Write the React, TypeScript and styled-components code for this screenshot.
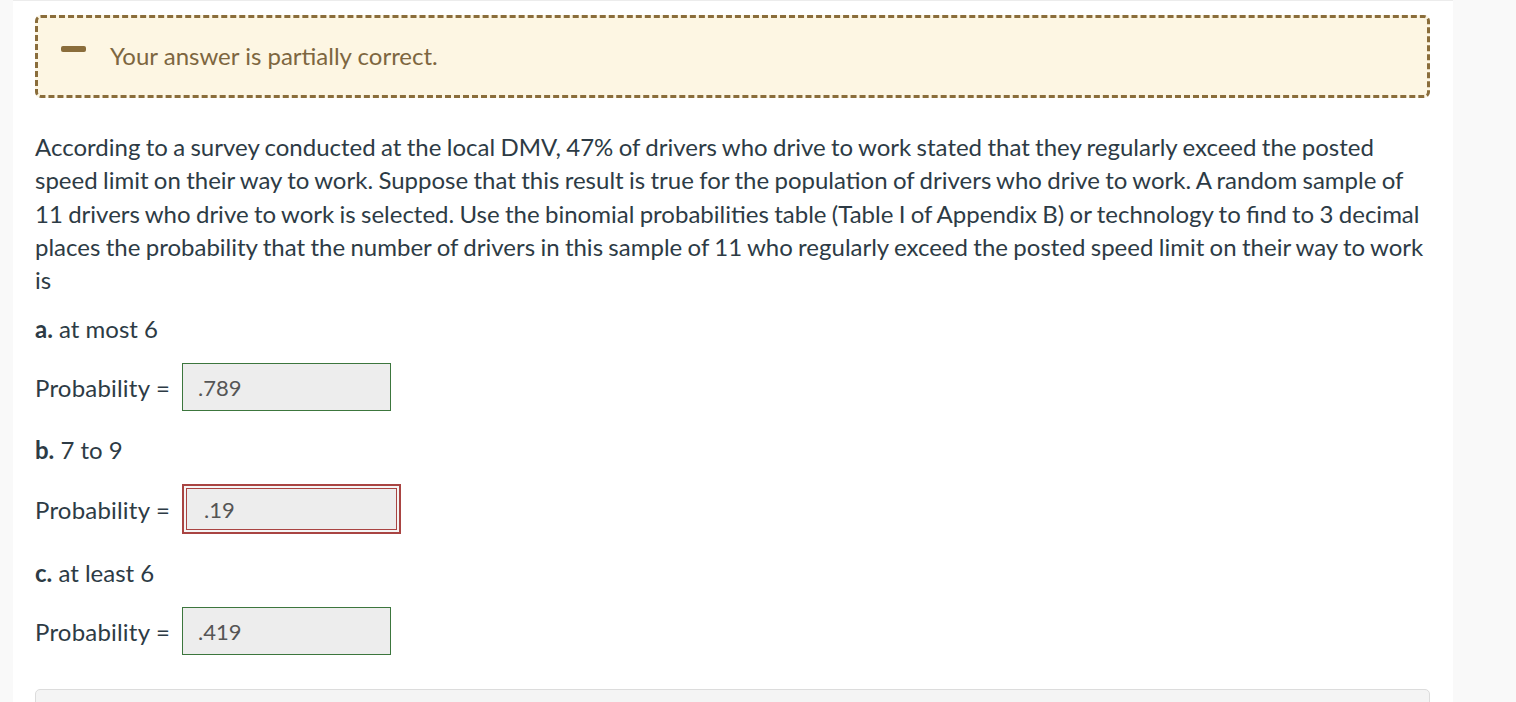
import React from 'react'
import styled, { createGlobalStyle } from 'styled-components'

const GlobalStyle = createGlobalStyle`
  html, body {
    margin: 0;
    padding: 0;
    background: #f9f9f9;
    font-family: Lato, 'Open Sans', 'Liberation Sans', sans-serif;
  }
`

type Status = 'correct' | 'incorrect'

const parts: { letter: string; label: string; value: string; status: Status }[] = [
  { letter: 'a.', label: 'at most 6', value: '.789', status: 'correct' },
  { letter: 'b.', label: '7 to 9', value: '.19', status: 'incorrect' },
  { letter: 'c.', label: 'at least 6', value: '.419', status: 'correct' },
]

function App() {
  return (
    <>
      <GlobalStyle />
      <Page>
        <Panel>
          <Banner>
            <Minus />
            <BannerText>Your answer is partially correct.</BannerText>
          </Banner>
          <Question>
            According to a survey conducted at the local DMV, 47% of drivers who drive to
            work stated that they regularly exceed the posted speed limit on their way to
            work. Suppose that this result is true for the population of drivers who drive
            to work. A random sample of 11 drivers who drive to work is selected. Use the
            binomial probabilities table (Table I of Appendix B) or technology to find to 3
            decimal places the probability that the number of drivers in this sample of 11
            who regularly exceed the posted speed limit on their way to work is
          </Question>
          {parts.map((p) => (
            <Part key={p.letter}>
              <PartLabel>
                <b>{p.letter}</b> {p.label}
              </PartLabel>
              <AnswerRow>
                <FieldLabel>Probability =</FieldLabel>
                {p.status === 'incorrect' ? (
                  <WrongFrame>
                    <WrongInput>{p.value}</WrongInput>
                  </WrongFrame>
                ) : (
                  <RightInput>{p.value}</RightInput>
                )}
              </AnswerRow>
            </Part>
          ))}
          <NextBox />
        </Panel>
      </Page>
    </>
  )
}

const Page = styled.div`
  display: flex;
  min-height: 702px;
  overflow: hidden;
`

const Panel = styled.div`
  margin-left: 13px;
  width: 1440px;
  background: #fff;
  border-top: 1px solid #ececec;
  padding: 14px 23px 0 22px;
  box-sizing: border-box;
  height: 702px;
  overflow: hidden;
`

const Banner = styled.div`
  height: 83px;
  box-sizing: border-box;
  background: #fdf6e3;
  border: 3px dashed #8a6d3b;
  border-radius: 6px;
  display: flex;
  align-items: center;
  padding-left: 23px;
  gap: 24px;
`

const Minus = styled.span`
  width: 25px;
  height: 6px;
  border-radius: 2px;
  background: #8a6d3b;
  margin-top: -16px;
`

const BannerText = styled.span`
  font-size: 24px;
  color: #7d6640;
  margin-top: -2px;
`

const Question = styled.p`
  margin: 32px 0 0;
  font-size: 24px;
  line-height: 33.3px;
  color: #2d3b45;
  word-spacing: -0.8px;
`

const Part = styled.div`
  margin-top: 16px;
  color: #2d3b45;
`

const PartLabel = styled.div`
  font-size: 24px;
  line-height: 33px;
  b {
    font-weight: 700;
  }
`

const AnswerRow = styled.div`
  display: flex;
  align-items: center;
  gap: 12px;
  margin-top: 18px;
  margin-bottom: 22px;
`

const FieldLabel = styled.span`
  font-size: 24px;
  color: #2d3b45;
  letter-spacing: 0.2px;
`

const RightInput = styled.div`
  width: 209px;
  height: 48px;
  box-sizing: border-box;
  background: #ededed;
  border: 1px solid #3c763d;
  padding-left: 15px;
  display: flex;
  align-items: center;
  font-size: 22px;
  color: #555;
`

const WrongFrame = styled.div`
  width: 219px;
  height: 50px;
  box-sizing: border-box;
  border: 2px solid #a94442;
  padding: 2px;
  background: #f5f5f5;
`

const WrongInput = styled.div`
  height: 100%;
  box-sizing: border-box;
  border: 1px solid #a94442;
  background: #ededed;
  padding-left: 17px;
  display: flex;
  align-items: center;
  font-size: 22px;
  color: #555;
`

const NextBox = styled.div`
  margin-top: 34px;
  height: 40px;
  background: #f4f4f4;
  border: 1px solid #dcdcdc;
  border-radius: 5px 5px 0 0;
`

export default App
